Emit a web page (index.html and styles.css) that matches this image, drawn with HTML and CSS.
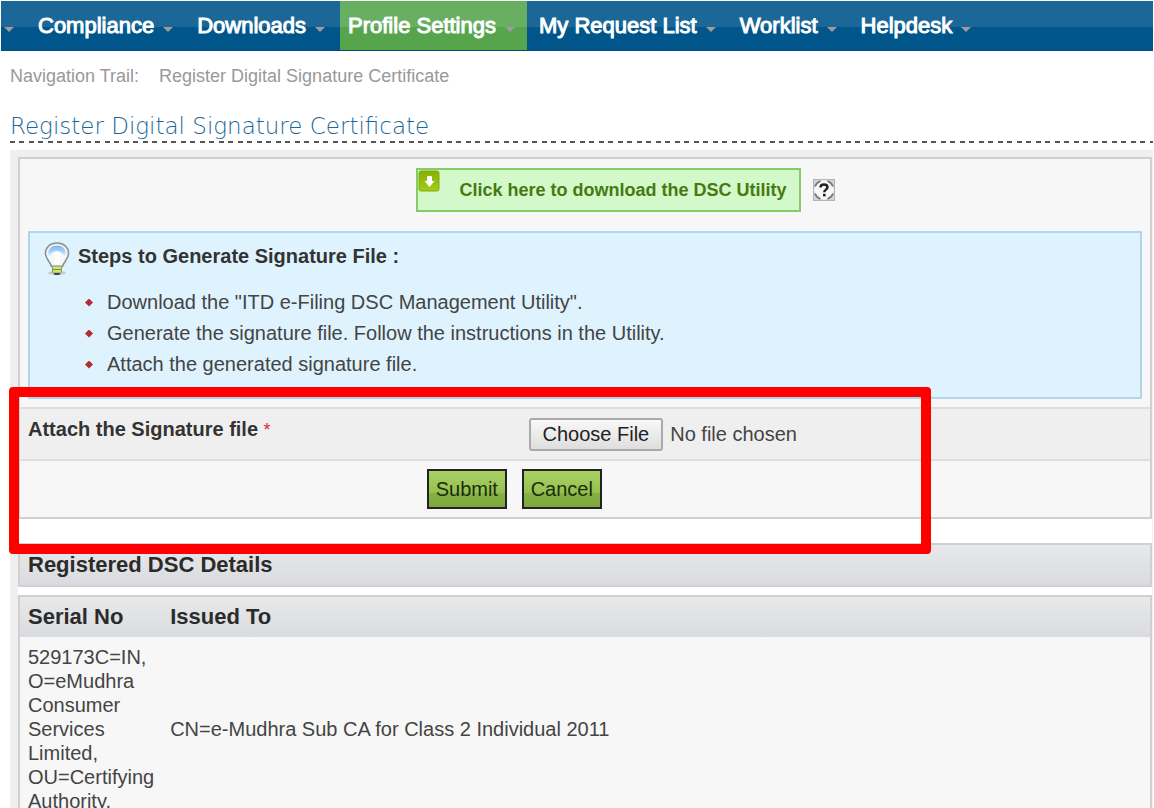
FILE: index.html
```html
<!DOCTYPE html>
<html lang="en">
<head>
  <meta charset="UTF-8">
  <title>Register Digital Signature Certificate</title>
  <link rel="stylesheet" href="styles.css">
</head>
<body>

<nav class="main-nav">
  <a href="#" class="nav-item first" aria-label="Previous menu"><span class="caret"></span></a>
  <a href="#" class="nav-item">Compliance<span class="caret"></span></a>
  <a href="#" class="nav-item">Downloads<span class="caret"></span></a>
  <a href="#" class="nav-item active">Profile Settings<span class="caret"></span></a>
  <a href="#" class="nav-item">My Request List<span class="caret"></span></a>
  <a href="#" class="nav-item">Worklist<span class="caret"></span></a>
  <a href="#" class="nav-item">Helpdesk<span class="caret"></span></a>
</nav>

<div class="trail">
  <span>Navigation Trail:</span>
  <span>Register Digital Signature Certificate</span>
</div>

<h1>Register Digital Signature Certificate</h1>

<main class="panel">
  <form class="dsc-form">
    <div class="download-row">
      <a href="#" class="download-btn">
        <svg class="download-icon" width="22" height="22" viewBox="0 0 22 22">
          <defs>
            <linearGradient id="lime" x1="0" y1="0" x2="0" y2="1">
              <stop offset="0" stop-color="#86b000"/>
              <stop offset="1" stop-color="#a6cb16"/>
            </linearGradient>
          </defs>
          <rect x="1" y="1" width="20" height="20" rx="2" fill="url(#lime)" stroke="#7fae0b"/>
          <path d="M9 6.500Q11.500 5 14 6.500V11h2.500l-5 6l-5 -6H9z" fill="#fff"/>
        </svg>
        <span>Click here to download the DSC Utility</span>
      </a>
      <a href="#" class="help" aria-label="Help">
        <svg width="22" height="22" viewBox="0 0 22 22">
          <rect x="0.500" y="0.500" width="21" height="21" fill="#d4d4d4" stroke="#b4b4b4"/>
          <circle cx="11" cy="11" r="9.800" fill="#f8f8f8"/>
          <g fill="none" stroke="#777" stroke-width="1.800">
            <path d="M2 7.500Q3.500 3.500 7.500 2"/>
            <path d="M14.500 2Q18.500 3.500 20 7.500"/>
            <path d="M20 14.500Q18.500 18.500 14.500 20"/>
            <path d="M7.500 20Q3.500 18.500 2 14.500"/>
          </g>
          <path d="M7.500 8.500C7.500 4.500 14.500 4.700 14.500 8.300C14.500 10.600 11.200 10.700 11.200 13.300" fill="none" stroke="#222" stroke-width="2.400"/>
          <rect x="10" y="14.800" width="2.600" height="2.600" fill="#222"/>
        </svg>
      </a>
    </div>

    <div class="steps">
      <h2>
        <svg width="26" height="36" viewBox="0 0 26 36">
          <defs>
            <linearGradient id="glass" x1="0" y1="0" x2="0" y2="1">
              <stop offset="0" stop-color="#7fb6ec"/>
              <stop offset="0.500" stop-color="#a9d2f5"/>
              <stop offset="1" stop-color="#ffffff"/>
            </linearGradient>
          </defs>
          <ellipse cx="13" cy="32" rx="9" ry="2" fill="#c5cdd1"/>
          <path d="M13 2C6 2 1.500 6.500 1.500 12.500C1.500 18 6 20 7.500 25.500H18.500C20 20 24.500 18 24.500 12.500C24.500 6.500 20 2 13 2Z" fill="#f4f8fa" stroke="#8b8f92" stroke-width="1.600"/>
          <path d="M13 4.500C7.500 4.500 4.200 8 4.200 12.500C4.200 14 5 15.500 6 16.500C7 12 10 10 13 10C16 10 19 12 20 16.500C21 15.500 21.800 14 21.800 12.500C21.800 8 18.500 4.500 13 4.500Z" fill="url(#glass)"/>
          <path d="M10 12Q13 9 16 12Q16.500 17 14.500 24H11.500Q9.500 17 10 12Z" fill="#fff"/>
          <rect x="8.500" y="25" width="9" height="7" rx="1" fill="#cfe27a" stroke="#8d9a66"/>
          <path d="M8.500 28.500h9" stroke="#7f8f4c"/>
          <rect x="10" y="32" width="6" height="2" rx="1" fill="#44454a"/>
        </svg>
        Steps to Generate Signature File :
      </h2>
      <ul>
        <li>Download the "ITD e-Filing DSC Management Utility".</li>
        <li>Generate the signature file. Follow the instructions in the Utility.</li>
        <li>Attach the generated signature file.</li>
      </ul>
    </div>

    <div class="attach-section">
      <div class="attach-row">
        <label for="signatureFile">Attach the Signature file <span class="required">*</span></label>
        <input type="file" id="signatureFile">
      </div>
      <div class="button-row">
        <button type="submit">Submit</button>
        <button type="button">Cancel</button>
      </div>
      <div class="highlight"></div>
    </div>
  </form>

  <h2 class="section-title">Registered DSC Details</h2>

  <table class="dsc-table">
    <thead>
      <tr><th class="serial">Serial No</th><th>Issued To</th></tr>
    </thead>
    <tbody>
      <tr>
        <td>529173C=IN, O=eMudhra Consumer Services Limited, OU=Certifying Authority,</td>
        <td>CN=e-Mudhra Sub CA for Class 2 Individual 2011</td>
      </tr>
    </tbody>
  </table>
</main>

</body>
</html>
```
FILE: styles.css
```css
* { box-sizing: border-box; }

body {
  margin: 0;
  padding: 1px;
  height: 100vh;
  overflow: hidden;
  font-family: Arial, "Liberation Sans", sans-serif;
  font-size: 20px;
  color: #444;
  background: #fff;
}

/* Top menu */
.main-nav {
  display: flex;
  height: 50px;
  background: linear-gradient(#1b6797 0, #1b6797 26px, #00568a 26px);
  border-bottom: 1px solid #004a7c;
}

.nav-item {
  display: flex;
  align-items: center;
  gap: 9px;
  padding: 0 12px;
  color: #fff;
  font-size: 22px;
  -webkit-text-stroke: 1px #fff;
  text-decoration: none;
  white-space: nowrap;
}

.nav-item.first {
  padding-left: 3px;
}

.nav-item.active {
  margin-left: 3px;
  padding-left: 8px;
  background: linear-gradient(#69af62 0, #69af62 26px, #56a54d 26px);
}

.caret {
  margin-top: 8px;
  border: 5px solid transparent;
  border-top-color: #a09a9c;
  border-bottom: 0;
}

.trail {
  display: flex;
  gap: 20px;
  padding: 14px 9px 0;
  font-size: 18px;
  line-height: 22px;
  color: #999;
}

h1 {
  margin: 25px 0 0 9px;
  padding-bottom: 3px;
  font-family: "Century Gothic", "DejaVu Sans", sans-serif;
  font-size: 23px;
  font-weight: 200;
  line-height: 28px;
  color: #1c6797;
  background: repeating-linear-gradient(90deg, #555 0 5px, transparent 5px 9px, #555 9px 14px, transparent 14px 19px) bottom / 100% 2px no-repeat;
}

/* Content */
.panel {
  margin: 7px 0 0 9px;
  border: solid #efefef;
  border-width: 7px 1px 0 8px;
}

.dsc-form {
  border: 2px solid #d0d0d0;
  background: #f7f7f7;
}

.download-row {
  display: flex;
  align-items: center;
  gap: 12px;
  padding: 9px 0 19px 35%;
}

.download-btn {
  display: flex;
  height: 44px;
  padding-right: 12px;
  gap: 20px;
  align-items: center;
  border: 2px solid #85cb68;
  background: #d3f8c9;
  color: #467a10;
  font-size: 18px;
  font-weight: bold;
  text-decoration: none;
}

.download-icon {
  align-self: flex-start;
}

.help {
  display: flex;
}

.steps {
  margin: 0 8px 8px;
  padding: 8px 14px 17px;
  border: 2px solid #b0d7e8;
  background: #dff3fe;
}

.steps h2 {
  display: flex;
  align-items: flex-start;
  gap: 8px;
  margin: 0;
  font-size: 20px;
  line-height: 30px;
  color: #333;
}

.steps ul {
  margin: 10px 0 0;
  padding: 0 0 0 41px;
  list-style: none;
  line-height: 31px;
}

.steps li {
  display: flex;
  align-items: center;
  gap: 14px;
}

.steps li::before {
  content: "";
  width: 8px;
  height: 8px;
  background: #b22c30;
  clip-path: polygon(50% 0, 75% 25%, 100% 50%, 75% 75%, 50% 100%, 25% 75%, 0 50%, 25% 25%);
}

.attach-section {
  position: relative;
}

.attach-row {
  display: flex;
  padding: 9px 0 8px;
  border-top: 2px solid #dedede;
  border-bottom: 2px solid #dedede;
  background: #efefef;
}

.attach-row label {
  width: 45%;
  padding-left: 8px;
  font-weight: bold;
  color: #333;
}

.required {
  color: #d9303e;
  font-size: 18px;
  font-weight: normal;
}

input[type="file"] {
  font: inherit;
  color: #444;
}

input[type="file"]::file-selector-button {
  height: 33px;
  margin: 0 7px 0 0;
  padding: 0 12px;
  border: 2px solid #aaa;
  border-radius: 3px;
  background: linear-gradient(#f8f8f8, #dedede);
  font: inherit;
  color: #222;
}

.button-row {
  display: flex;
  gap: 15px;
  padding: 8px 0 8px 36%;
}

.button-row button {
  width: 80px;
  height: 40px;
  padding: 0;
  border: 2px solid #222;
  background: linear-gradient(#aad065 0, #97c04f 60%, #86b144 60%, #7ea83f 100%);
  font: inherit;
  color: #1c2b0c;
}

/* Red frame over the attach rows */
.highlight {
  position: absolute;
  top: -20px;
  bottom: -37px;
  left: -11px;
  width: 922px;
  max-width: 100%;
  border: 10px solid #f00;
  border-radius: 4px;
  pointer-events: none;
}

.section-title {
  margin: 24px 0 8px;
  padding: 0 8px;
  border: 2px solid #d0d0d0;
  background: linear-gradient(#e8e9eb, #dadbde);
  font-size: 22px;
  line-height: 40px;
  color: #2b2b2b;
}

.dsc-table {
  width: 100%;
  border: 2px solid #d0d0d0;
  border-bottom: 0;
  border-spacing: 0;
  background: #f7f7f7;
  line-height: 24px;
}

.dsc-table thead {
  background: linear-gradient(#e8e9eb, #dadbde);
}

.dsc-table th {
  padding: 8px;
  font-size: 22px;
  text-align: left;
  color: #2b2b2b;
}

.dsc-table .serial {
  width: 140px;
}

.dsc-table td {
  padding: 8px;
}
```
